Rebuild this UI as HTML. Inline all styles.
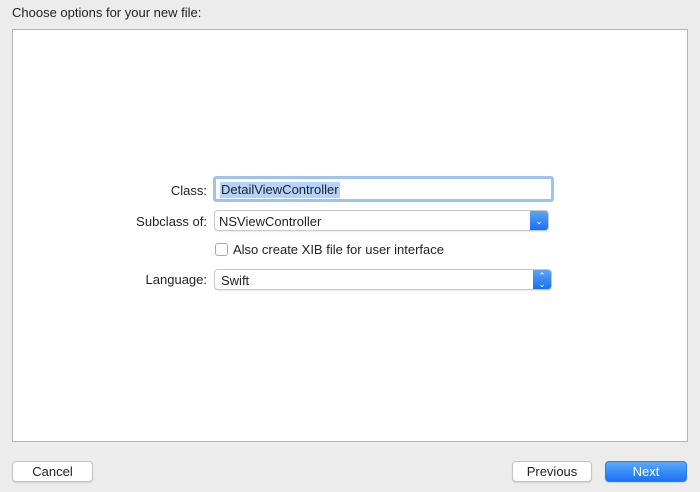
<!DOCTYPE html>
<html><head><style>
body{margin:0;width:700px;height:492px;background:#ececec;font-family:"Liberation Sans",sans-serif;font-size:13px;color:#222;position:relative;overflow:hidden}
.a{position:absolute}
.lbl{text-align:right;width:200px;left:7px}
.pop{background:#fff;border:1px solid #c8c8c8;border-radius:4px;box-sizing:border-box;box-shadow:0 1px 1px rgba(0,0,0,.08)}
.arr{position:absolute;right:0;top:0;bottom:0;width:18px;background:linear-gradient(#5aa5fb,#1a6ff2);border-radius:0 3px 3px 0;color:#fff;font-size:9px;text-align:center}
.btn{background:#fff;border:1px solid #c3c3c3;border-radius:4px;box-sizing:border-box;text-align:center;line-height:19px;box-shadow:0 1px 1px rgba(0,0,0,.1)}
</style></head><body>
<div class="a" style="left:12px;top:5px">Choose options for your new file:</div>
<div class="a" style="left:12px;top:29px;width:676px;height:413px;background:#fff;border:1px solid #b5b5b5;box-sizing:border-box"></div>
<div class="a lbl" style="top:183px">Class:</div>
<div class="a" style="left:213px;top:176px;width:341px;height:26px;border:3px solid #9fc3ee;border-radius:3px;box-sizing:border-box;background:#fff"><span style="position:absolute;left:4px;top:3px;background:#b3d3fb;padding:0 1px;line-height:16px">DetailViewController</span></div>
<div class="a lbl" style="top:214px">Subclass of:</div>
<div class="a pop" style="left:214px;top:210px;width:335px;height:21px"><span style="position:absolute;left:4px;top:3px">NSViewController</span><div class="arr" style="line-height:20px">&#8964;</div></div>
<div class="a" style="left:215px;top:243px;width:13px;height:13px;border:1px solid #aaa;border-radius:3px;box-sizing:border-box;background:#fff"></div>
<div class="a" style="left:233px;top:242px">Also create XIB file for user interface</div>
<div class="a lbl" style="top:272px">Language:</div>
<div class="a pop" style="left:214px;top:269px;width:338px;height:21px"><span style="position:absolute;left:6px;top:3px">Swift</span><div class="arr" style="line-height:8px;padding-top:2px;box-sizing:border-box">&#8963;<br>&#8964;</div></div>
<div class="a btn" style="left:12px;top:461px;width:81px;height:21px">Cancel</div>
<div class="a btn" style="left:512px;top:461px;width:80px;height:21px">Previous</div>
<div class="a btn" style="left:605px;top:461px;width:82px;height:21px;background:linear-gradient(#5aa8fd,#1b72f5);border-color:#2a7ef0;color:#fff">Next</div>
</body></html>
